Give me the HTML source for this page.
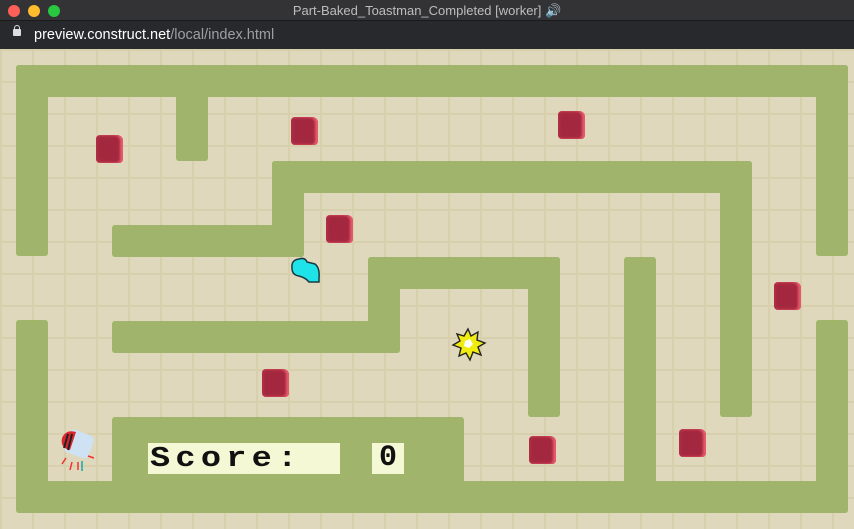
<!DOCTYPE html><html><head><style>
body{margin:0;width:854px;height:529px;overflow:hidden;font-family:"Liberation Sans",sans-serif;background:#ddd7bb;position:relative}
.t{position:absolute;left:0;top:0;width:854px;height:21px;background:#333336;color:#bdbdbd;font-size:13px;text-align:center;line-height:21px;border-bottom:1px solid #1a1a1a;box-sizing:border-box}
.d{position:absolute;top:5px;width:12px;height:12px;border-radius:50%}
.a{position:absolute;left:0;top:21px;width:854px;height:28px;background:#27292c;color:#fff;font-size:14.5px;line-height:28px}
.g{position:absolute;left:0;top:49px;width:854px;height:480px;background-color:#dfd8bc;background-image:linear-gradient(90deg,#d8cfac 2px,transparent 2px),linear-gradient(#d8cfac 2px,transparent 2px);background-size:32px 32px;background-position:0px 0px,0 0}
.w{position:absolute;background:#a0b46c;border-radius:3px}
.k{position:absolute;width:27px;height:28px;background:#a3283f;border-radius:4px 6px 4px 4px;box-shadow:inset -3px 0 2px #e85a6a,inset 0 0 4px #c0394f}
</style></head><body>
<div class="t"><span class="d" style="left:8px;background:#fe5f57"></span><span class="d" style="left:28px;background:#febc2e"></span><span class="d" style="left:48px;background:#28c840"></span>Part-Baked_Toastman_Completed [worker] 🔊</div>
<div class="a"><span style="position:absolute;left:13px;top:8px;width:8px;height:7px;background:#ddd;border-radius:1px"></span><span style="position:absolute;left:14px;top:4px;width:4px;height:5px;border:1.5px solid #ddd;border-bottom:none;border-radius:3px 3px 0 0"></span><span style="position:absolute;left:34px">preview.construct.net<span style="color:#9aa0a6">/local/index.html</span></span></div>
<div class="g"></div>
<div class="w" style="left:16px;top:65px;width:832px;height:32px"></div>
<div class="w" style="left:16px;top:481px;width:832px;height:32px"></div>
<div class="w" style="left:16px;top:65px;width:32px;height:191px"></div>
<div class="w" style="left:16px;top:320px;width:32px;height:193px"></div>
<div class="w" style="left:816px;top:65px;width:32px;height:191px"></div>
<div class="w" style="left:816px;top:320px;width:32px;height:193px"></div>
<div class="w" style="left:176px;top:65px;width:32px;height:96px"></div>
<div class="w" style="left:272px;top:161px;width:480px;height:32px"></div>
<div class="w" style="left:272px;top:161px;width:32px;height:96px"></div>
<div class="w" style="left:112px;top:225px;width:192px;height:32px"></div>
<div class="w" style="left:720px;top:161px;width:32px;height:256px"></div>
<div class="w" style="left:368px;top:257px;width:192px;height:32px"></div>
<div class="w" style="left:528px;top:257px;width:32px;height:160px"></div>
<div class="w" style="left:368px;top:257px;width:32px;height:96px"></div>
<div class="w" style="left:112px;top:321px;width:288px;height:32px"></div>
<div class="w" style="left:624px;top:257px;width:32px;height:256px"></div>
<div class="w" style="left:112px;top:417px;width:352px;height:96px"></div>
<div class="k" style="left:96px;top:135px"></div>
<div class="k" style="left:291px;top:117px"></div>
<div class="k" style="left:558px;top:111px"></div>
<div class="k" style="left:326px;top:215px"></div>
<div class="k" style="left:774px;top:282px"></div>
<div class="k" style="left:262px;top:369px"></div>
<div class="k" style="left:529px;top:436px"></div>
<div class="k" style="left:679px;top:429px"></div>
<svg style="position:absolute;left:289px;top:256px" width="38" height="28"><path d="M3 12 Q2 4 10 3 Q16 1 18 6 L26 8 Q31 12 30 22 L30 26 L20 26 Q17 22 10 20 Q3 19 3 12Z" fill="#1ee4ea" stroke="#1a3a40" stroke-width="1.5"/></svg>
<svg style="position:absolute;left:451px;top:327px" width="36" height="36"><path d="M17 2 L20 9 L27 5 L26 13 L34 16 L27 20 L30 28 L22 25 L19 33 L15 26 L8 29 L10 21 L2 18 L9 14 L6 7 L13 9Z" fill="#f0ec10" stroke="#222" stroke-width="1.4"/><path d="M14 14 L19 12 L22 17 L18 21 L13 19Z" fill="#fff"/></svg>
<svg style="position:absolute;left:56px;top:428px" width="46" height="44"><rect x="10" y="4" width="26" height="24" rx="5" fill="#cfe2f4" transform="rotate(20 23 16)"/><path d="M6 10 Q10 1 20 4 L14 22 Q4 20 6 10Z" fill="#d8252e"/><path d="M12 6 L8 20 M16 6 L12 22" stroke="#222" stroke-width="2"/><path d="M16 34 L14 42 M22 34 L22 42 M32 28 L38 30 M10 30 L6 36" stroke="#e33" stroke-width="1.5"/><path d="M26 33 L26 43" stroke="#1aa" stroke-width="1.5"/></svg>
<div style="position:absolute;left:148px;top:443px;width:192px;height:31px;background:#f4f8d4"></div>
<div style="position:absolute;left:150px;top:443px;font-family:'Liberation Mono',monospace;font-weight:bold;font-size:32px;line-height:31px;letter-spacing:5px;color:#111;transform:scale(1.05,0.9);transform-origin:left center">Score:</div>
<div style="position:absolute;left:372px;top:443px;width:32px;height:31px;background:#f4f8d4;font-family:'Liberation Mono',monospace;font-weight:bold;font-size:30px;line-height:31px;color:#111;text-align:center">0</div>
</body></html>
